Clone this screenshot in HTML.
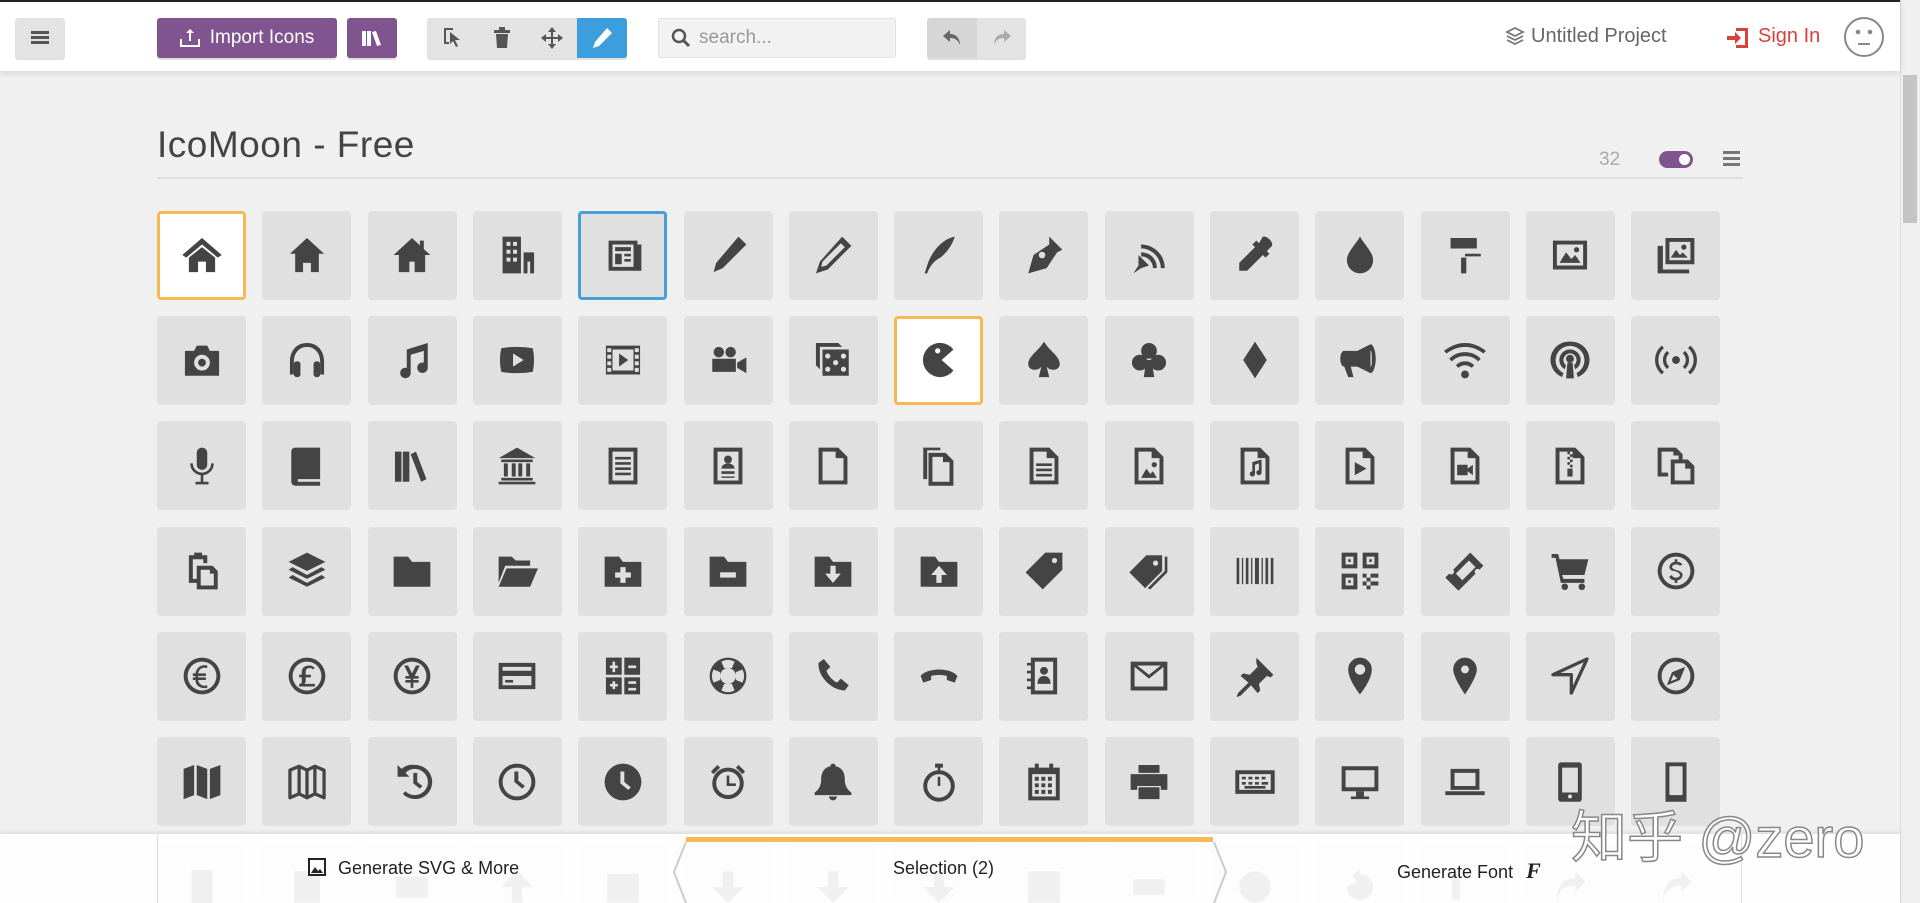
<!DOCTYPE html>
<html><head><meta charset="utf-8"><style>
*{box-sizing:border-box;margin:0;padding:0}
html,body{width:1920px;height:903px;overflow:hidden;background:#f0f0f0;font-family:"Liberation Sans",sans-serif;color:#444}
#wrap{position:relative;width:1920px;height:903px;overflow:hidden}
#top{position:absolute;left:0;top:0;width:1900px;height:71px;background:#fff;box-shadow:0 2px 6px rgba(0,0,0,.12);border-top:2px solid #222;z-index:5}
.btn{position:absolute;top:16px;height:40px;border-radius:3px;display:flex;align-items:center;justify-content:center;box-shadow:0 2px 0 rgba(0,0,0,.12)}
.g{background:#e3e3e3}
.p{background:#80558f;color:#fff}
#scroll{position:absolute;left:1900px;top:0;width:20px;height:903px;background:#f0f0f0;border-left:1px solid #ddd}
#thumb{position:absolute;left:1903px;top:75px;width:14px;height:148px;background:#c4c4c4}
.tile{position:absolute;width:89px;height:89px;background:#e0e0e0;border-radius:4px;display:flex;align-items:center;justify-content:center}
.tile svg{width:42px;height:42px;fill:#444}
.sel{background:#fff;border:3px solid #f5bb52}
.blu{border:3px solid #4a9fd8}
#bot{position:absolute;left:0;top:834px;width:1900px;height:69px;background:rgba(255,255,255,.92);z-index:4;box-shadow:0 -2px 4px rgba(0,0,0,.08)}
.bt{position:absolute;top:24px;font-size:18px;color:#222;white-space:nowrap}
</style></head><body><div id="wrap">
<div id="top">
 <div class="btn g" style="left:15px;width:50px"><svg width="18" height="16" viewBox="0 0 18 16" fill="#555"><rect y="1" width="18" height="3"/><rect y="6" width="18" height="3"/><rect y="11" width="18" height="3"/></svg></div>
 <div class="btn p" style="left:157px;width:180px;font-size:19px"><svg width="20" height="18" viewBox="0 0 20 18" fill="#fff" style="margin-right:10px"><path d="M9 0h2v8h3l-4 4-4-4h3z" transform="rotate(180 10 6)"/><path d="M0 10h2v6h16v-6h2v8H0z"/></svg>Import Icons</div>
 <div class="btn p" style="left:347px;width:50px"><svg width="22" height="18" viewBox="0 0 22 18" fill="#fff"><rect x="1" y="2" width="4" height="15"/><rect x="6" y="2" width="4" height="15"/><path d="M11 3l4-1 5 14-4 1z"/></svg></div>
 <div class="btn g" style="left:427px;width:200px;justify-content:flex-start">
  <svg style="position:absolute;left:16px" width="20" height="22" viewBox="0 0 20 22" fill="#555"><path d="M1 1h9v2H3v12h3v2H1z"/><path d="M7 5l10 8-5 0 3 6-2 1-3-6-3 3z"/></svg>
  <svg style="position:absolute;left:66px" width="18" height="22" viewBox="0 0 18 22" fill="#555"><rect x="6" y="0" width="6" height="3"/><rect x="1" y="3" width="16" height="3"/><path d="M3 7h12l-1 14H4z"/></svg>
  <svg style="position:absolute;left:114px" width="22" height="22" viewBox="0 0 22 22" fill="#555"><path d="M11 0l4 5h-3v5h5V7l5 4-5 4v-3h-5v5h3l-4 5-4-5h3v-5H5v3l-5-4 5-4v3h5V5H7z"/></svg>
  <div style="position:absolute;left:150px;top:0;width:50px;height:40px;background:#3d9ede;border-radius:0 3px 3px 0;display:flex;align-items:center;justify-content:center"><svg width="22" height="22" viewBox="0 0 22 22" fill="#fff"><path d="M16 1l5 5-13 13-6 2 2-6z"/></svg></div>
 </div>
 <div class="btn" style="left:658px;width:238px;background:#f2f2f2;border:1px solid #e2e2e2;box-shadow:none;justify-content:flex-start;padding-left:12px;font-size:19px;color:#999"><svg width="20" height="20" viewBox="0 0 20 20" style="margin-right:8px"><circle cx="8" cy="8" r="6" fill="none" stroke="#555" stroke-width="2.5"/><path d="M12 12l6 6" stroke="#555" stroke-width="3"/></svg>search...</div>
 <div class="btn g" style="left:927px;width:99px">
  <div style="position:absolute;left:0;top:0;width:50px;height:40px;background:#d6d6d6;border-radius:3px 0 0 3px"></div>
  <svg style="position:absolute;left:15px;top:10px" width="20" height="20" viewBox="0 0 20 20" fill="#666"><path d="M8 2L1 8l7 6v-4c5 0 8 2 10 7 0-7-4-11-10-11z"/></svg>
  <svg style="position:absolute;left:65px;top:10px" width="20" height="20" viewBox="0 0 20 20" fill="#aaa"><path d="M12 2l7 6-7 6v-4c-5 0-8 2-10 7 0-7 4-11 10-11z"/></svg>
 </div>
 <svg style="position:absolute;left:1505px;top:24px" width="20" height="22" viewBox="0 0 20 22" fill="none" stroke="#777" stroke-width="1.8"><path d="M10 2l8 4-8 4-8-4z"/><path d="M2 10l8 4 8-4M2 14l8 4 8-4"/></svg>
 <div style="position:absolute;left:1531px;top:23px;font-size:20px;color:#666">Untitled Project</div>
 <svg style="position:absolute;left:1727px;top:25px" width="22" height="22" viewBox="0 0 22 22" fill="#d9413b"><path d="M9 1h12v20H9v-3h9V4H9z"/><path d="M0 9h8V5l6 6-6 6v-4H0z"/></svg>
 <div style="position:absolute;left:1758px;top:23px;font-size:20px;color:#d9413b">Sign In</div>
 <svg style="position:absolute;left:1843px;top:14px" width="42" height="42" viewBox="0 0 42 42" fill="none" stroke="#888" stroke-width="2"><circle cx="21" cy="21" r="19"/><circle cx="15" cy="16" r="1.3" fill="#888"/><circle cx="27" cy="16" r="1.3" fill="#888"/><path d="M15 28h12"/></svg>
</div>
<div id="scroll"></div><div id="thumb"></div>
<div style="position:absolute;left:157px;top:124px;font-size:37px;color:#444;letter-spacing:0.5px">IcoMoon - Free</div>
<div style="position:absolute;left:157px;top:177px;width:1585px;height:2px;background:#ddd"></div>
<div style="position:absolute;left:1599px;top:149px;font-size:19px;color:#aaa">32</div>
<div style="position:absolute;left:1659px;top:151px;width:34px;height:17px;border-radius:9px;background:#80558f"><div style="position:absolute;right:3px;top:3px;width:11px;height:11px;border-radius:50%;background:#fff"></div></div>
<svg style="position:absolute;left:1723px;top:151px" width="17" height="15" viewBox="0 0 17 15" fill="#777"><rect width="17" height="3"/><rect y="6" width="17" height="3"/><rect y="12" width="17" height="3"/></svg>
<div id="grid"></div>
<div id="bot">
 <div style="position:absolute;left:157px;top:0;width:1px;height:69px;background:#ddd"></div>
 <div style="position:absolute;left:1741px;top:0;width:1px;height:69px;background:#ddd"></div>
 <div style="position:absolute;left:686px;top:3px;width:527px;height:5px;background:#f5bb52"></div>
 <svg style="position:absolute;left:664px;top:8px" width="30" height="61"><path d="M22 0L10 30 22 61" stroke="#ccc" stroke-width="2" fill="none"/></svg>
 <svg style="position:absolute;left:1208px;top:8px" width="30" height="61"><path d="M6 0L18 30 6 61" stroke="#ccc" stroke-width="2" fill="none"/></svg>
 <svg style="position:absolute;left:308px;top:24px" width="18" height="18" viewBox="0 0 18 18"><rect x="1" y="1" width="16" height="16" fill="none" stroke="#222" stroke-width="2"/><path d="M3 15l4-6 3 4 2-2 3 4z" fill="#222"/></svg>
 <div class="bt" style="left:338px">Generate SVG &amp; More</div>
 <div class="bt" style="left:893px">Selection (2)</div>
 <div class="bt" style="left:1397px">Generate Font <i style="font-family:'Liberation Serif',serif;font-size:22px;font-weight:bold;margin-left:8px">F</i></div>
</div>
<div style="position:absolute;left:1571px;top:793px;z-index:6;font-family:'Liberation Sans','Noto Sans CJK SC',sans-serif;font-size:56px;color:#fff;-webkit-text-stroke:1.5px #888;white-space:nowrap">知乎 @zero</div>
</div>
<script>
const I=[
'<path d="M16 3L1 16l3 2L16 8l12 10 3-2z"/><path d="M6 18l10-8 10 8v11h-7v-8h-6v8H6z"/>',
'<path d="M16 3L3 15h4v14h6v-7h6v7h6V15h4z"/>',
'<path d="M16 3L2 16h4v13h8v-8h4v8h8V16h4l-5-4.5V5h-3v3.7z"/>',
'<path d="M5 2h14v28H5z M21 14h8v16h-3v-9h-2v9h-3z"/><path fill="#e0e0e0" d="M8 6h3v3H8zM13 6h3v3h-3zM8 12h3v3H8zM13 12h3v3h-3zM8 18h3v3H8zM13 18h3v3h-3z"/>',
'<path fill-rule="evenodd" d="M5 5h22v3h3v20H5zM8 8v17h16V8z M10 10h12v3H10z M10 15h5v8h-5z M17 15h5v2h-5z M17 19h5v2h-5z"/>',
'<path d="M24 2l6 6L12 26l-7 3 2-7z"/>',
'<path fill-rule="evenodd" d="M23 2l7 7L12 27l-9 3 3-9zM8 21l-1 4 4-1 14-14-3-3z"/>',
'<path d="M28 2C18 4 10 14 7 24L5 30h2c2-6 6-10 10-12 4-3 9-9 11-16z"/>',
'<path fill-rule="evenodd" d="M20 2l10 10-4 2-8 12L4 30l4-14 12-8zM12 16a2.5 2.5 0 105 0 2.5 2.5 0 10-5 0z"/>',
'<path d="M10 8C20 8 28 16 28 26h-3c0-8-7-15-15-15zM10 14c7 0 12 5 12 12h-3c0-5-4-9-9-9z"/><path d="M8 16l8 8-6 2-6 4 4-6z"/>',
'<path d="M22 2c3-1 8 4 7 7l-4 4 2 2-3 3-2-2L10 28H4v-6l12-12-2-2 3-3 2 2z"/>',
'<path d="M16 2c4 7 10 12 10 18a10 10 0 01-20 0C6 14 12 9 16 2z"/>',
'<path d="M5 3h20v8H5z"/><path d="M25 6h3v9H16v3h-3v12h4V18h-1v-1h12V6z"/>',
'<path fill-rule="evenodd" d="M3 5h26v22H3zM6 8v16h20V8z"/><path d="M8 22l5-8 4 5 3-3 4 6z"/><circle cx="21" cy="12" r="2"/>',
'<path fill-rule="evenodd" d="M8 3h22v20H8zM11 6v14h16V6z"/><path d="M2 9h4v18h20v3H2z"/><path d="M12 18l4-6 3 4 2-2 4 4z"/><circle cx="22" cy="10" r="2"/>',
'<path fill-rule="evenodd" d="M3 9h7l2-4h8l2 4h7v19H3zM16 12a6 6 0 100 12 6 6 0 100-12zM16 15a3 3 0 110 6 3 3 0 110-6z"/>',
'<path d="M16 3C8 3 3 9 3 17v10h3V17c0-6 4-11 10-11s10 5 10 11v10h3V17c0-8-5-14-13-14z"/><rect x="6" y="17" width="5" height="12" rx="2"/><rect x="21" y="17" width="5" height="12" rx="2"/>',
'<path d="M12 8l16-5v19a4 4 0 11-3-4V9l-10 3v14a4 4 0 11-3-4z"/>',
'<path d="M4 7q12-2 24 0 2 9 0 18-12 2-24 0-2-9 0-18z"/><path fill="#e0e0e0" d="M13 11l8 5-8 5z"/>',
'<path fill-rule="evenodd" d="M3 5h26v22H3zM8 8v16h16V8zM4 7h3v3H4zM4 12h3v3H4zM4 17h3v3H4zM4 22h3v3H4zM25 7h3v3h-3zM25 12h3v3h-3zM25 17h3v3h-3zM25 22h3v3h-3z"/><path d="M13 11l7 5-7 5z"/>',
'<circle cx="9" cy="10" r="4"/><circle cx="18" cy="10" r="4"/><path d="M4 15h18v10H4zM23 18l7-4v12l-7-4z"/>',
'<path d="M3 3h17l3 3H6v17L3 20z"/><path fill-rule="evenodd" d="M8 8h20v20H8zM12 11a2 2 0 100 4 2 2 0 100-4zM24 11a2 2 0 100 4 2 2 0 100-4zM18 16a2 2 0 100 4 2 2 0 100-4zM12 21a2 2 0 100 4 2 2 0 100-4zM24 21a2 2 0 100 4 2 2 0 100-4z"/>',
'<path fill-rule="evenodd" d="M27 8A13 13 0 1027 24L18 16zM15 7a2 2 0 100 4 2 2 0 100-4z"/>',
'<path d="M16 2c-4 7-12 11-12 17 0 5 7 6 10 2l-2 8h8l-2-8c3 4 10 3 10-2 0-6-8-10-12-17z"/>',
'<circle cx="16" cy="9" r="6"/><circle cx="9" cy="18" r="6"/><circle cx="23" cy="18" r="6"/><path d="M14 16h4l2 13h-8z"/>',
'<path d="M16 2l9 14-9 14-9-14z"/>',
'<path d="M24 4c2 0 4 5 4 11s-2 11-4 11L14 21H9l2 8H7l-3-8c-2 0-3-3-3-6s1-6 3-6h10z"/><path fill="#e0e0e0" d="M24 9c1 0 1 3 1 6s0 6-1 6z"/>',
'<path d="M16 24a3 3 0 110 6 3 3 0 110-6zM16 17c3 0 5 1 7 3l-2 2c-1-1-3-2-5-2s-4 1-5 2l-2-2c2-2 4-3 7-3zM16 10c5 0 9 2 12 5l-2 2c-3-3-6-4-10-4s-7 1-10 4l-2-2c3-3 7-5 12-5zM16 3c7 0 12 3 16 6l-2 2C26 8 21 6 16 6S6 8 2 11L0 9c4-3 9-6 16-6z"/>',
'<path fill-rule="evenodd" d="M16 2a14 14 0 00-6 27l1-3a11 11 0 1110 0l1 3A14 14 0 0016 2zM16 8a8 8 0 00-4 15l1-3a5 5 0 116 0l1 3a8 8 0 00-4-15z"/><circle cx="16" cy="15" r="3"/><path d="M14 18h4l1 12h-6z"/>',
'<circle cx="16" cy="16" r="3"/><path fill="none" stroke="#444" stroke-width="2.5" d="M10 10a8 8 0 000 12M22 10a8 8 0 010 12M6 6a13 13 0 000 20M26 6a13 13 0 010 20"/>',
'<rect x="12" y="2" width="8" height="17" rx="4"/><path fill="none" stroke="#444" stroke-width="2" d="M8 14a8 8 0 0016 0M16 22v7M11 29h10"/>',
'<path d="M7 2h19v24H9v2h17v3H7a3 3 0 01-3-3V5a3 3 0 013-3z"/>',
'<path d="M3 5h5v23H3zM9 5h5v23H9zM15 7l4-2 8 21-4 2z"/>',
'<path d="M16 2l14 8H2z"/><path d="M4 11h24v2H4zM6 14h3v10H6zM12 14h3v10h-3zM17 14h3v10h-3zM23 14h3v10h-3zM4 25h24v2H4zM2 28h28v2H2z"/>',
'<path fill-rule="evenodd" d="M5 2h22v28H5zM8 5v22h16V5zM10 9h12v2H10zM10 13h12v2H10zM10 17h12v2H10zM10 21h12v2H10z"/>',
'<path fill-rule="evenodd" d="M5 2h22v28H5zM8 5v22h16V5z"/><circle cx="16" cy="11" r="3"/><path d="M11 18a5 4 0 0110 0zM11 20h10v2H11zM11 24h10v1H11z"/>',
'<path fill-rule="evenodd" d="M5 2h15l7 7v21H5zM8 5v22h16V10h-6V5z"/>',
'<path fill-rule="evenodd" d="M8 6h13l6 6v19H8zM11 9v19h13V13h-5V9z"/><path d="M4 2h13v2H7v22H4z"/>',
'<path fill-rule="evenodd" d="M5 2h15l7 7v21H5zM8 5v22h16V10h-6V5z"/><path d="M10 14h12v2H10zM10 18h12v2H10zM10 22h12v2H10z"/>',
'<path fill-rule="evenodd" d="M5 2h15l7 7v21H5zM8 5v22h16V10h-6V5z"/><path d="M10 25l4-7 3 4 2-2 3 5z"/><circle cx="20" cy="15" r="2"/>',
'<path fill-rule="evenodd" d="M5 2h15l7 7v21H5zM8 5v22h16V10h-6V5z"/><path d="M14 13l7-2v10a2 2 0 11-2-2v-5l-3 1v7a2 2 0 11-2-2z"/>',
'<path fill-rule="evenodd" d="M5 2h15l7 7v21H5zM8 5v22h16V10h-6V5z"/><path d="M12 13l9 5-9 5z"/>',
'<path fill-rule="evenodd" d="M5 2h15l7 7v21H5zM8 5v22h16V10h-6V5z"/><path d="M10 15h8v8h-8zM18 18l4-3v8l-4-3z"/>',
'<path fill-rule="evenodd" d="M5 2h15l7 7v21H5zM8 5v22h16V10h-6V5z"/><path d="M14 5h2v2h-2zM16 7h2v2h-2zM14 9h2v2h-2zM16 11h2v2h-2zM14 13h2v2h-2zM16 15h2v2h-2zM14 18h4v6h-4z"/>',
'<path fill-rule="evenodd" d="M2 2h14l5 5v4h-3V8h-4V5H5v16h5v3H2zM12 11h13l5 5v14H12zM15 14v13h12V18h-4v-4z"/>',
'<path fill-rule="evenodd" d="M6 4h4V2h6v2h4v6h-3V7H9v15h3v3H6z M12 12h12l4 4v14H12zM15 15v12h10V18h-3v-3z"/>',
'<path d="M16 2l14 7-14 7L2 9z"/><path d="M5 13l11 6 11-6 3 2-14 7-14-7zM5 19l11 6 11-6 3 2-14 7-14-7z"/>',
'<path d="M2 5h11l3 4h14v19H2z"/>',
'<path d="M2 5h10l3 3h11v4H7l-5 13z"/><path d="M8 14h24l-6 14H2z"/>',
'<path d="M2 5h11l3 4h14v19H2z"/><path fill="#e0e0e0" d="M14 13h4v4h4v4h-4v4h-4v-4h-4v-4h4z"/>',
'<path d="M2 5h11l3 4h14v19H2z"/><path fill="#e0e0e0" d="M10 17h12v4H10z"/>',
'<path d="M2 5h11l3 4h14v19H2z"/><path fill="#e0e0e0" d="M14 12h4v6h4l-6 7-6-7h4z"/>',
'<path d="M2 5h11l3 4h14v19H2z"/><path fill="#e0e0e0" d="M16 12l6 7h-4v6h-4v-6h-4z"/>',
'<path fill-rule="evenodd" d="M17 2h13v13L15 30 2 17zM24 6a2 2 0 100 4 2 2 0 100-4z"/>',
'<path fill-rule="evenodd" d="M14 4h12v12L13 29 1 17zM21 8a2 2 0 100 4 2 2 0 100-4z"/><path d="M28 5h2v12L17 30l-2-1 13-13z"/>',
'<path d="M2 6h2v20H2zM6 6h1v20H6zM9 6h2v20H9zM13 6h1v20h-1zM16 6h3v20h-3zM21 6h1v20h-1zM24 6h2v20h-2zM28 6h2v20h-2z"/>',
'<path fill-rule="evenodd" d="M2 2h12v12H2zM5 5v6h6V5zM18 2h12v12H18zM21 5v6h6V5zM2 18h12v12H2zM5 21v6h6v-6z"/><path d="M7 7h2v2H7zM23 7h2v2h-2zM7 23h2v2H7zM18 18h3v3h-3zM24 18h3v3h-3zM21 21h3v3h-3zM18 24h3v3h-3zM24 24h6v3h-6zM27 18h3v3h-3zM21 27h3v3h-3z"/>',
'<path fill-rule="evenodd" d="M20 2l10 10-3 3a2 2 0 00-3 3l-3 3L21 21 11 31 1 21l3-3a2 2 0 003-3l3-3zM19 8L9 18l5 5 10-10z"/>',
'<path d="M2 3h5l1 4h22l-3 12H10l1 3h16v3H9L5 6H2z"/><circle cx="12" cy="28" r="2.5"/><circle cx="25" cy="28" r="2.5"/>',
'<path fill-rule="evenodd" d="M16 2a14 14 0 110 28 14 14 0 110-28zM16 5a11 11 0 100 22 11 11 0 100-22z"/><path d="M15 7h2v2c2 0 3 1 4 2l-2 1c-1-1-2-1-3-1-2 0-3 1-3 2s2 2 3 2c3 1 5 2 5 4s-2 4-4 4v2h-2v-2c-2 0-4-1-4-3l2-1c0 1 1 2 3 2s3-1 3-2-1-2-4-3c-2 0-4-1-4-3s2-4 4-4z"/>',
'<path fill-rule="evenodd" d="M16 2a14 14 0 110 28 14 14 0 110-28zM16 5a11 11 0 100 22 11 11 0 100-22z"/><path d="M20 10c-3-1-6 0-7 4h6v2h-6v1h6v2h-6c1 4 4 5 7 4v2c-4 1-9-1-9-6H9v-2h2v-1H9v-2h2c1-5 5-7 9-6z"/>',
'<path fill-rule="evenodd" d="M16 2a14 14 0 110 28 14 14 0 110-28zM16 5a11 11 0 100 22 11 11 0 100-22z"/><path d="M18 8c2 0 3 1 4 2l-2 1c0-1-1-1-2-1-2 0-3 1-3 3v2h4v2h-4v3c0 1-1 2-1 2h8v2H10v-2c2 0 2-1 2-2v-3h-2v-2h2v-2c0-3 2-5 6-5z"/>',
'<path fill-rule="evenodd" d="M16 2a14 14 0 110 28 14 14 0 110-28zM16 5a11 11 0 100 22 11 11 0 100-22z"/><path d="M10 8h3l3 6 3-6h3l-4 8h3v2h-4v1h4v2h-4v4h-2v-4h-4v-2h4v-1h-4v-2h3z"/>',
'<path fill-rule="evenodd" d="M2 6h28v20H2zM5 9v3h22V9zM5 16v7h22v-7z"/><path d="M7 19h6v2H7z"/>',
'<path d="M3 2h12v13H3zM17 2h12v13H17zM3 17h12v13H3zM17 17h12v13H17z"/><path fill="#e0e0e0" d="M6 8h6v2H6zM8 5h2v8H8zM20 8h6v2h-6zM6 22h6v2H6zM8 20h2v6H8zM20 20h6v2h-6zM20 25h6v2h-6z"/>',
'<path fill-rule="evenodd" d="M16 2a14 14 0 110 28 14 14 0 110-28zM16 10a6 6 0 100 12 6 6 0 100-12zM11 5l2 5 6 0 2-5a11 11 0 00-10 0zM27 11l-5 2v6l5 2a11 11 0 000-10zM21 27l-2-5h-6l-2 5a11 11 0 0010 0zM5 21l5-2v-6l-5-2a11 11 0 000 10z"/>',
'<path d="M9 3l5 6-3 3c1 3 4 7 8 9l3-3 6 5-3 4C15 27 4 16 5 6z"/>',
'<path d="M16 11c6 0 12 2 14 5l-2 5-6-2v-3c-4-1-8-1-12 0v3l-6 2-2-5c2-3 8-5 14-5z"/>',
'<path fill-rule="evenodd" d="M6 2h20v28H6zM9 5v22h14V5z"/><path d="M3 6h4v2H3zM3 12h4v2H3zM3 18h4v2H3zM3 24h4v2H3z"/><circle cx="16" cy="12" r="3"/><path d="M11 22c0-4 2-6 5-6s5 2 5 6z"/>',
'<path fill-rule="evenodd" d="M2 5h28v22H2zM5 9v15h22V9l-11 9zM7 8l9 7 9-7z"/>',
'<path d="M17 2l13 13-2 2-3-1-6 6 1 5-2 2-5-6-8 8-3 1 1-3 8-8-6-5 2-2 5 1 6-6-1-3z"/>',
'<path fill-rule="evenodd" d="M16 2a9 9 0 019 9c0 8-9 19-9 19S7 19 7 11a9 9 0 019-9zM16 7a4 4 0 100 8 4 4 0 100-8z"/>',
'<path fill-rule="evenodd" d="M16 2a9 9 0 019 9c0 6-9 19-9 19S7 17 7 11a9 9 0 019-9zM16 8a3 3 0 100 6 3 3 0 100-6z"/>',
'<path d="M29 3L3 15h14v14z" fill="none" stroke="#444" stroke-width="2.5" stroke-linejoin="round"/>',
'<path fill-rule="evenodd" d="M16 2a14 14 0 110 28 14 14 0 110-28zM16 5a11 11 0 100 22 11 11 0 100-22z"/><path d="M23 9l-4 10-10 4 4-10zM14 15l-2 5 5-2z"/>',
'<path d="M2 6l8-3v23l-8 3zM12 3l8 3v23l-8-3zM22 6l8-3v23l-8 3z"/>',
'<path fill="none" stroke="#444" stroke-width="2.5" stroke-linejoin="round" d="M3 7l7-3 6 3 6-3 7 3v21l-7-3-6 3-6-3-7 3zM10 4v21M16 7v21M22 4v21"/>',
'<path fill-rule="evenodd" d="M18 3a13 13 0 11-9 22l2-2a10 10 0 100-14l3 3H5V3l3 3a13 13 0 0110-3z"/><path d="M17 9h3v7l4 3-2 2-5-4z"/>',
'<path fill-rule="evenodd" d="M16 2a14 14 0 110 28 14 14 0 110-28zM16 5a11 11 0 100 22 11 11 0 100-22z"/><path d="M14 8h3v7l5 4-2 2-6-5z"/>',
'<path fill-rule="evenodd" d="M16 2a14 14 0 110 28 14 14 0 110-28zM14 8v9l6 5 2-2-5-4V8z"/>',
'<path fill-rule="evenodd" d="M16 5a12 12 0 110 24 12 12 0 110-24zM16 8a9 9 0 100 18 9 9 0 100-18z"/><path d="M15 11h2v6h5v2h-7zM3 8l5-5 2 2-5 5zM29 8l-5-5-2 2 5 5z"/>',
'<path d="M16 2c2 0 2 2 2 2 5 1 7 5 7 10 0 5 2 8 5 10v2H2v-2c3-2 5-5 5-10 0-5 2-9 7-10 0 0 0-2 2-2zM13 27h6a3 3 0 01-6 0z"/>',
'<path fill-rule="evenodd" d="M16 7a12 12 0 110 24 12 12 0 110-24zM16 10a9 9 0 100 18 9 9 0 100-18z"/><path d="M13 2h6v3h-6zM15 4h2v4h-2zM15 12h2v7h-2z"/>',
'<path fill-rule="evenodd" d="M4 5h24v25H4zM7 10v17h18V10z"/><path d="M9 2h3v5H9zM20 2h3v5h-3zM9 12h3v3H9zM14 12h3v3h-3zM19 12h3v3h-3zM9 17h3v3H9zM14 17h3v3h-3zM19 17h3v3h-3zM9 22h3v3H9zM14 22h3v3h-3zM19 22h3v3h-3z"/>',
'<path d="M8 3h16v6H8zM2 10h28v12h-5v-3H7v3H2zM8 20h16v9H8z"/>',
'<path fill-rule="evenodd" d="M1 7h30v18H1zM4 10v12h24V10z"/><path d="M6 12h3v2H6zM11 12h3v2h-3zM16 12h3v2h-3zM21 12h3v2h-3zM6 16h3v2H6zM11 16h3v2h-3zM16 16h3v2h-3zM21 16h5v2h-5zM8 19h16v2H8z"/>',
'<path fill-rule="evenodd" d="M2 4h28v19H2zM5 7v13h22V7z"/><path d="M13 23h6v4h4v2H9v-2h4z"/>',
'<path fill-rule="evenodd" d="M5 6h22v16H5zM8 9v10h16V9z"/><path d="M1 23h30v3H1z"/>',
'<path fill-rule="evenodd" d="M9 1h14a2 2 0 012 2v26a2 2 0 01-2 2H9a2 2 0 01-2-2V3a2 2 0 012-2zM10 5v19h12V5z"/><circle cx="16" cy="27" r="1.5" fill="#e0e0e0"/>',
'<path fill-rule="evenodd" d="M8 1h16v30H8zM11 4v22h10V4z"/>'
];
const r7=['<path d="M8 3h16v26H8z"/>','<path d="M6 4h20v24H6z"/>','<path d="M4 8h24v16H4z"/>','<path d="M16 3l12 13h-8v12h-8V16H4z"/>','<path d="M4 6h24v22H4z"/>','<path d="M12 4h8v12h8L16 28 4 16h8z"/>','<path d="M12 4h8v12h8L16 28 4 16h8z"/>','<path d="M12 4h8v12h8L16 28 4 16h8z"/>','<path d="M4 4h24v24H4z"/>','<path d="M4 10h24v12H4z"/>','<ellipse cx="16" cy="16" rx="12" ry="12"/>','<path d="M6 16a10 10 0 1010-10v-4l-6 6 6 6v-4"/>','<path d="M6 6h6v20H6z"/>','<path d="M20 4l8 8-8 8v-5C12 15 8 18 6 26 6 14 12 9 20 9z"/>','<path d="M20 4l8 8-8 8v-5C12 15 8 18 6 26 6 14 12 9 20 9z"/>'];
let h='';
const all=I.concat(r7);
for(let i=0;i<all.length;i++){
 const r=Math.floor(i/15),c=i%15;
 const x=157+c*105.3,y=210.6+r*105.3;
 let cls='tile';
 if(i==0||i==22)cls+=' sel';
 if(i==4)cls+=' blu';
 const hh=r==6?'height:61px;align-items:flex-start;padding-top:24px;':'';
 h+=`<div class="${cls}" style="left:${x.toFixed(1)}px;top:${y.toFixed(1)}px;${hh}"><svg viewBox="0 0 32 32">${all[i]}</svg></div>`;
}
document.getElementById('grid').innerHTML=h;
</script>
</body></html>
